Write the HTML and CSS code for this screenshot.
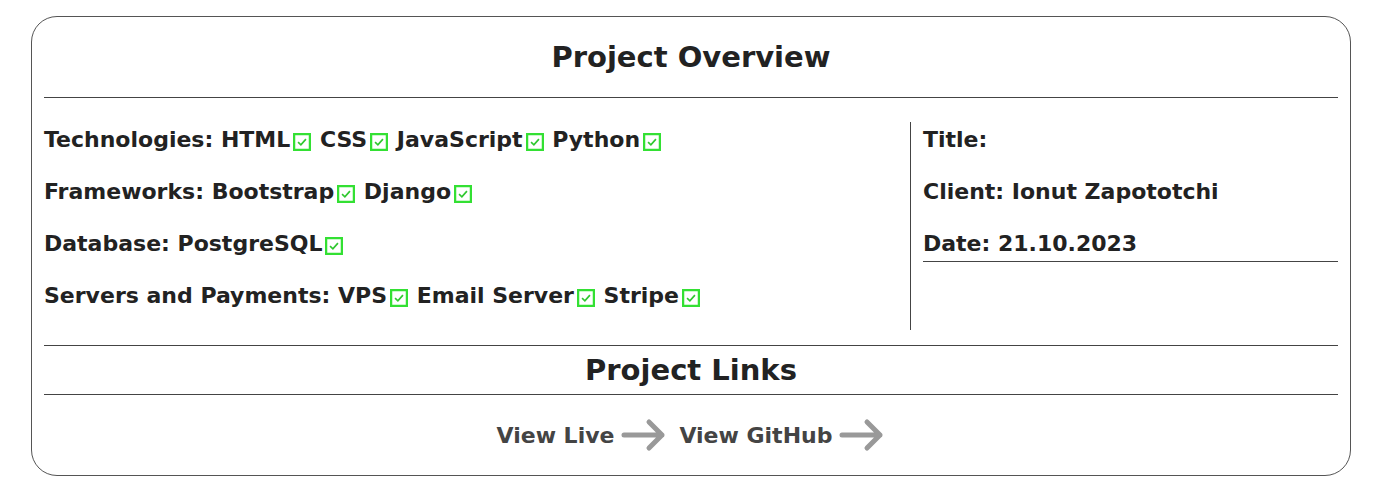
FILE: index.html
```html
<!DOCTYPE html>
<html>
<head>
<meta charset="utf-8">
<link rel="stylesheet" href="styles.css">
</head>
<body>
<div class="card">
  <h2 class="title">Project Overview</h2>
  <div class="rule"></div>
  <div class="overview">
    <div class="col-left">
      <p class="line">Technologies: HTML<svg class="chk" viewBox="0 0 16 16"><rect x="1" y="1" width="14" height="14"/><path d="M4.5 8.2 L7 10.5 L11.5 5.5"/></svg> CSS<svg class="chk" viewBox="0 0 16 16"><rect x="1" y="1" width="14" height="14"/><path d="M4.5 8.2 L7 10.5 L11.5 5.5"/></svg> JavaScript<svg class="chk" viewBox="0 0 16 16"><rect x="1" y="1" width="14" height="14"/><path d="M4.5 8.2 L7 10.5 L11.5 5.5"/></svg> Python<svg class="chk" viewBox="0 0 16 16"><rect x="1" y="1" width="14" height="14"/><path d="M4.5 8.2 L7 10.5 L11.5 5.5"/></svg></p>
      <p class="line">Frameworks: Bootstrap<svg class="chk" viewBox="0 0 16 16"><rect x="1" y="1" width="14" height="14"/><path d="M4.5 8.2 L7 10.5 L11.5 5.5"/></svg> Django<svg class="chk" viewBox="0 0 16 16"><rect x="1" y="1" width="14" height="14"/><path d="M4.5 8.2 L7 10.5 L11.5 5.5"/></svg></p>
      <p class="line">Database: PostgreSQL<svg class="chk" viewBox="0 0 16 16"><rect x="1" y="1" width="14" height="14"/><path d="M4.5 8.2 L7 10.5 L11.5 5.5"/></svg></p>
      <p class="line">Servers and Payments: VPS<svg class="chk" viewBox="0 0 16 16"><rect x="1" y="1" width="14" height="14"/><path d="M4.5 8.2 L7 10.5 L11.5 5.5"/></svg> Email Server<svg class="chk" viewBox="0 0 16 16"><rect x="1" y="1" width="14" height="14"/><path d="M4.5 8.2 L7 10.5 L11.5 5.5"/></svg> Stripe<svg class="chk" viewBox="0 0 16 16"><rect x="1" y="1" width="14" height="14"/><path d="M4.5 8.2 L7 10.5 L11.5 5.5"/></svg></p>
    </div>
    <div class="col-right">
      <p class="line">Title:</p>
      <p class="line">Client: Ionut Zapototchi</p>
      <p class="line last">Date: 21.10.2023</p>
    </div>
  </div>
  <div class="rule"></div>
  <h2 class="links-title">Project Links</h2>
  <div class="rule"></div>
  <div class="links">
    <a class="link" href="#">View Live<svg class="arrow" viewBox="0 0 46 34"><path d="M3 17 H41 M28 4 L41 17 L28 30"/></svg></a>
    <a class="link" href="#">View GitHub<svg class="arrow" viewBox="0 0 46 34"><path d="M3 17 H41 M28 4 L41 17 L28 30"/></svg></a>
  </div>
</div>
</body>
</html>
```

FILE: styles.css
```css
* { box-sizing: border-box; }
html, body { margin: 0; padding: 0; background: #fff; }
body {
  font-family: "DejaVu Sans", sans-serif;
  color: #222;
}
.card {
  margin: 16px 0 0 31px;
  width: 1320px;
  height: 460px;
  border: 1px solid #555;
  border-radius: 26px;
  padding: 0 12px;
}
.title {
  margin: 20px 0 20px;
  height: 40px;
  line-height: 40px;
  text-align: center;
  font-size: 29px;
  font-weight: bold;
}
.rule {
  height: 1px;
  background: #444;
}
.overview {
  display: flex;
  margin-top: 24px;
  margin-bottom: 15px;
}
.col-left {
  width: 867px;
  border-right: 1px solid #444;
}
.col-right {
  flex: 1;
  padding-left: 12px;
}
.line {
  margin: 0 0 18px;
  height: 34px;
  line-height: 36px;
  font-size: 22px;
  font-weight: bold;
  white-space: nowrap;
}
.line.last {
  margin-bottom: 0;
  border-bottom: 1px solid #444;
  height: 36px;
}
.chk {
  width: 18px;
  height: 18px;
  vertical-align: -4px;
  margin-left: 3px;
  margin-right: 1px;
}
.chk rect {
  fill: none;
  stroke: #33e033;
  stroke-width: 2;
}
.chk path {
  fill: none;
  stroke: #2fc82f;
  stroke-width: 1.5;
}
.links-title {
  margin: 0;
  height: 48px;
  line-height: 48px;
  text-align: center;
  font-size: 29px;
  font-weight: bold;
}
.links {
  display: flex;
  justify-content: center;
  gap: 12px;
  padding-top: 23px;
}
.link {
  display: flex;
  align-items: center;
  gap: 7px;
  color: #444;
  text-decoration: none;
  font-size: 22px;
  font-weight: bold;
}
.arrow {
  width: 46px;
  height: 34px;
}
.arrow path {
  fill: none;
  stroke: #999;
  stroke-width: 5;
  stroke-linecap: round;
  stroke-linejoin: round;
}
```
